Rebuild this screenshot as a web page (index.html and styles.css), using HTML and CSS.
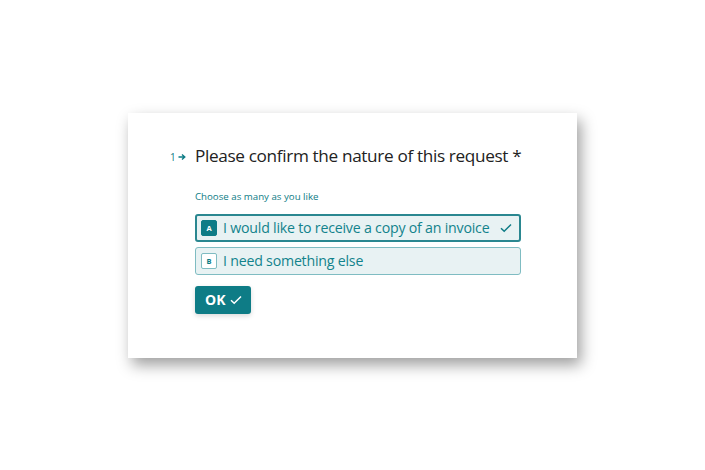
FILE: index.html
```html
<!DOCTYPE html>
<html>
<head>
<meta charset="utf-8">
<link rel="stylesheet" href="styles.css">
</head>
<body>
<div class="page">
  <div class="card">
    <div class="question">
      <div class="num">1<svg class="arrow" width="8" height="8" viewBox="0 0 8 8"><path d="M0.5 4H6.5M4 1.5L6.8 4L4 6.5" fill="none" stroke="#0e7c86" stroke-width="1.4"/></svg></div>
      <div class="body">
        <h1 class="title">Please confirm the nature of this request *</h1>
        <p class="hint">Choose as many as you like</p>
        <div class="options">
          <div class="option selected">
            <span class="key">A</span>
            <span class="label">I would like to receive a copy of an invoice</span>
            <svg class="check" width="12" height="10" viewBox="0 0 12 10"><path d="M1 5.2L4.2 8.3L11 1.5" fill="none" stroke="#0e7c86" stroke-width="1.5"/></svg>
          </div>
          <div class="option">
            <span class="key">B</span>
            <span class="label">I need something else</span>
          </div>
        </div>
        <button class="ok"><span>OK</span><svg width="12" height="10" viewBox="0 0 12 10"><path d="M1 5.2L4.2 8.3L11 1.5" fill="none" stroke="#fff" stroke-width="1.5"/></svg></button>
      </div>
    </div>
  </div>
</div>
</body>
</html>
```
FILE: styles.css
```css
* { box-sizing: border-box; }
html, body { margin: 0; padding: 0; background: #fff; }
body { font-family: "Open Sans", "Noto Sans", sans-serif; }
.page {
  width: 705px;
  height: 470px;
  display: flex;
  align-items: center;
  justify-content: center;
}
.card {
  width: 449px;
  height: 245px;
  background: #fff;
  box-shadow: 4px 7px 14px rgba(0,0,0,0.38);
  padding: 32px 56px 0 42px;
}
.question { display: flex; }
.num {
  width: 25px;
  flex: none;
  color: #0e7c86;
  font-size: 10px;
  display: flex;
  align-items: center;
  align-self: flex-start;
  gap: 2px;
  height: 22px;
  padding-top: 2px;
}
.arrow { display: block; }
.body { flex: 1; min-width: 0; }
.title {
  margin: 0;
  font-size: 17.2px;
  font-weight: 400;
  color: #222;
  line-height: 22px;
  white-space: nowrap;
  letter-spacing: -0.35px;
}
.hint {
  margin: 23px 0 10px;
  font-size: 9.7px;
  color: #0e7c86;
  line-height: 14px;
}
.options { display: flex; flex-direction: column; gap: 5px; }
.option {
  height: 28px;
  border: 1px solid #7fbcc2;
  background: #e8f2f3;
  border-radius: 3px;
  display: flex;
  align-items: center;
  padding: 0 0 0 5px;
  color: #12838c;
}
.option.selected { border: 2px solid #2a8790; padding-left: 4px; }
.key {
  width: 16px;
  height: 16px;
  border: 1px solid #7fbcc2;
  background: #fff;
  border-radius: 2px;
  font-size: 7.5px;
  font-weight: 700;
  display: flex;
  align-items: center;
  justify-content: center;
  flex: none;
  color: #0e7c86;
}
.selected .key { background: #0e7c86; border-color: #0e7c86; color: #fff; }
.label {
  margin-left: 6px;
  font-size: 14.2px;
  letter-spacing: -0.22px;
  flex: 1;
  white-space: nowrap;
}
.check { margin-right: 7px; }
.ok {
  margin-top: 11px;
  height: 28px;
  width: 56px;
  padding: 0 0 0 10px;
  background: #0e7c86;
  border: none;
  border-radius: 3px;
  color: #fff;
  font-family: inherit;
  font-size: 14px;
  font-weight: 700;
  display: flex;
  align-items: center;
  gap: 5px;
  box-shadow: 0 2px 5px rgba(0,0,0,0.15);
}
```
